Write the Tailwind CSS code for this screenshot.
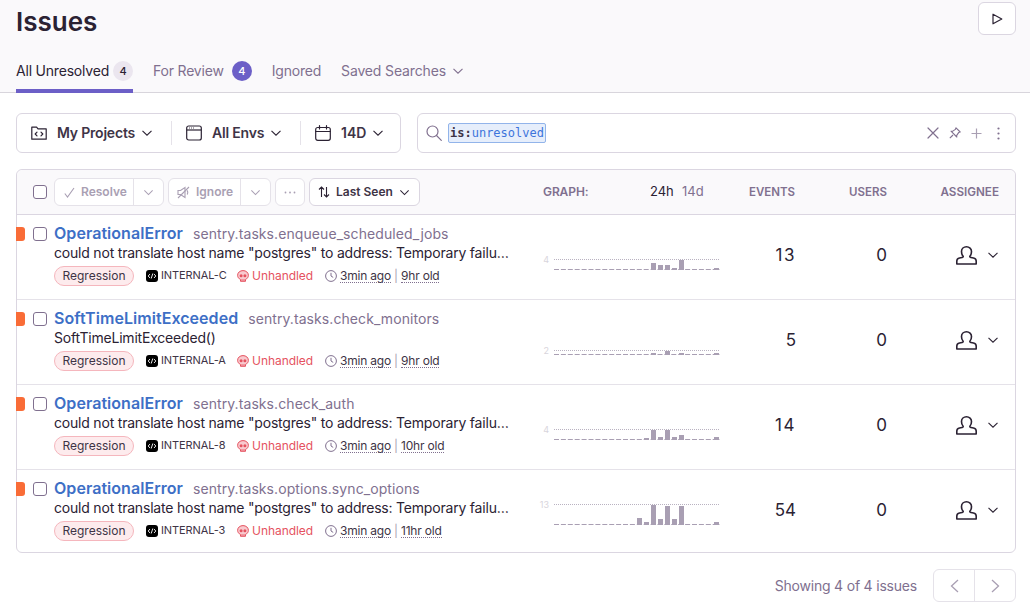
<!DOCTYPE html>
<html>
<head>
<meta charset="utf-8">
<script src="https://cdn.jsdelivr.net/npm/@tailwindcss/browser@4"></script>
</head>
<body class="w-[1030px] h-[612px] overflow-hidden bg-white font-['Inter',sans-serif] text-[#2b2233]">
<header class="h-[93px] bg-[#faf9fb] border-b border-[#d8d5dc] flex flex-col justify-between">
  <div class="flex justify-between items-start pl-4 pr-[14px] pt-[2px]">
    <h1 class="text-[26px] leading-[40px] font-semibold">Issues</h1>
    <button class="w-[38px] h-[33px] bg-white border border-[#dbd6e1] rounded-md flex items-center justify-center">
      <svg width="12" height="12" viewBox="0 0 12 12" fill="none" stroke="#2b2233" stroke-width="1.2" stroke-linejoin="round"><path d="M2 1.200v9.600L10.800 6z"/></svg>
    </button>
  </div>
  <nav class="flex items-stretch px-4 h-[36px] text-sm -mb-px">
    <a class="flex items-start gap-[4px] pt-[4px] border-b-4 border-[#6c5fc7] mr-5 text-[#2b2233] tracking-[-0.2px]">All Unresolved <span class="w-5 h-5 rounded-full bg-[#ebe6ef] text-[11px] leading-5 text-center font-medium">4</span></a>
    <a class="flex items-start gap-2 pt-[4px] mr-5 text-[#80708f] tracking-[-0.2px]">For Review <span class="w-5 h-5 rounded-full bg-[#6c5fc7] text-white text-[11px] leading-5 text-center font-medium">4</span></a>
    <a class="pt-[4px] mr-5 text-[#80708f] tracking-[-0.2px]">Ignored</a>
    <a class="flex items-start gap-[6px] pt-[4px] text-[#80708f] tracking-[-0.15px]">Saved Searches
      <svg class="mt-[4px]" width="12" height="12" viewBox="0 0 12 12" fill="none" stroke="#80708f" stroke-width="1.100"><path d="M1.500 3.800 6 8.200l4.500-4.400"/></svg>
    </a>
  </nav>
</header>

<main class="pl-4 pr-[14px] pt-5">
  <div class="flex gap-4 h-10">
    <div class="w-[385px] border border-[#dbd6e1] rounded-md flex items-center text-sm font-semibold text-[#3e3446]">
      <div class="flex items-center pl-[14px] w-[155px] border-r border-[#e5e2e9] h-[24px]">
        <svg width="16" height="16" viewBox="0 0 16 16" fill="none" stroke="#2b2233" stroke-width="1.200" stroke-linejoin="round" stroke-linecap="round"><path d="M.8 2.200h4.800l1.400 1.600h8.200v10.400H.8z"/><path d="M6 7.200 4.200 9 6 10.800M10 7.200 11.800 9 10 10.800"/></svg>
        <span class="ml-[10px] tracking-[-0.2px]">My Projects</span>
        <svg class="ml-[6px]" width="12" height="12" viewBox="0 0 12 12" fill="none" stroke="#2b2233" stroke-width="1.100"><path d="M1.500 3.800 6 8.200l4.500-4.400"/></svg>
      </div>
      <div class="flex items-center pl-[14px] w-[129px] border-r border-[#e5e2e9] h-[24px]">
        <svg width="16" height="16" viewBox="0 0 16 16" fill="none" stroke="#2b2233" stroke-width="1.200"><rect x=".7" y="1" width="14.600" height="14" rx="2"/><path d="M.7 5h14.600"/><path d="M3 3h.8M5 3h.8M7 3h.8" stroke-width="1"/></svg>
        <span class="ml-[10px] tracking-[-0.2px]">All Envs</span>
        <svg class="ml-[6px]" width="12" height="12" viewBox="0 0 12 12" fill="none" stroke="#2b2233" stroke-width="1.100"><path d="M1.500 3.800 6 8.200l4.500-4.400"/></svg>
      </div>
      <div class="flex items-center pl-[14px]">
        <svg width="16" height="16" viewBox="0 0 16 16" fill="none" stroke="#2b2233" stroke-width="1.200" stroke-linecap="round"><rect x=".7" y="2.500" width="14.600" height="12.800" rx="2"/><path d="M.7 6.500h14.600M4.500.7v3.200M11.500.7v3.200"/></svg>
        <span class="ml-[10px]">14D</span>
        <svg class="ml-[6px]" width="12" height="12" viewBox="0 0 12 12" fill="none" stroke="#2b2233" stroke-width="1.100"><path d="M1.500 3.800 6 8.200l4.500-4.400"/></svg>
      </div>
    </div>
    <div class="flex-1 border border-[#dbd6e1] rounded-md flex items-center pl-[8px] pr-[15px]">
      <svg width="16" height="16" viewBox="0 0 16 16" fill="none" stroke="#80708f" stroke-width="1.200" stroke-linecap="round"><circle cx="6.500" cy="6.500" r="5.500"/><path d="m10.500 10.500 4.800 4.800"/></svg>
      <span class="ml-[6px] h-[20px] px-px bg-[#e6eefb] border border-[#92b4ea] rounded-[2px] font-['DejaVu_Sans_Mono',monospace] text-[12px] leading-[18px]"><span class="text-[#3e3446] font-semibold">is:</span><span class="text-[#3d74db]">unresolved</span></span>
      <div class="ml-auto flex items-center text-[#80708f]">
        <svg width="12" height="12" viewBox="0 0 12 12" fill="none" stroke="#80708f" stroke-width="1.200" stroke-linecap="round"><path d="m1 1 10 10M11 1 1 11"/></svg>
        <svg class="ml-[10px]" width="12" height="12" viewBox="0 0 12 12" fill="none" stroke="#80708f" stroke-width="1.100" stroke-linejoin="round"><path d="M7 .8 11.200 5 9.600 5.600 7.600 8.600 7.800 10 2 4.200 3.400 4.400 6.400 2.400z"/><path d="M4 8 .8 11.200"/></svg>
        <svg class="ml-[10px]" width="11" height="11" viewBox="0 0 11 11" fill="none" stroke="#a99fb3" stroke-width="1.200"><path d="M5.500.5v10M.5 5.500h10"/></svg>
        <svg class="ml-[15px]" width="3" height="13" viewBox="0 0 3 13" fill="#80708f"><circle cx="1.500" cy="1.500" r="1.100"/><circle cx="1.500" cy="6.500" r="1.100"/><circle cx="1.500" cy="11.500" r="1.100"/></svg>
      </div>
    </div>
  </div>

  <section class="mt-4 h-[384px] border border-[#dbd6e1] rounded-md flex flex-col">
    <div class="h-[45px] shrink-0 bg-[#faf9fb] rounded-t-md border-b border-[#dbd6e1] flex items-center pl-4 pr-4 text-xs font-semibold text-[#80708f]">
      <span class="w-[14px] h-[14px] border border-[#80708f] rounded-[3px] bg-white shrink-0"></span>
      <div class="ml-[7px] flex h-[28px] w-[110px] border border-[#e5e2e9] rounded-md text-[#a99fb3] bg-white">
        <span class="w-[79px] border-r border-[#e5e2e9] flex items-center pl-[9px] gap-[6px]">
          <svg width="11" height="11" viewBox="0 0 11 11" fill="none" stroke="#a99fb3" stroke-width="1.100"><path d="M.8 6.500 3.500 10 10 1"/></svg>Resolve</span>
        <span class="flex-1 flex items-center justify-center"><svg width="11" height="11" viewBox="0 0 12 12" fill="none" stroke="#a99fb3" stroke-width="1.100"><path d="M1.500 3.800 6 8.200l4.500-4.400"/></svg></span>
      </div>
      <div class="ml-[4px] flex h-[28px] w-[103px] border border-[#e5e2e9] rounded-md text-[#a99fb3] bg-white">
        <span class="w-[72px] border-r border-[#e5e2e9] flex items-center pl-[8px] gap-[6px]">
          <svg width="13" height="13" viewBox="0 0 13 13" fill="none" stroke="#a99fb3" stroke-width="1.100"><path d="M1 4.500h2.500L8 1.500v10L3.500 8.500H1z"/><path d="M1 12 12 1M10 4.500c1 1 1 3 0 4"/></svg>Ignore</span>
        <span class="flex-1 flex items-center justify-center"><svg width="11" height="11" viewBox="0 0 12 12" fill="none" stroke="#a99fb3" stroke-width="1.100"><path d="M1.500 3.800 6 8.200l4.500-4.400"/></svg></span>
      </div>
      <div class="ml-[4px] h-[28px] w-[30px] border border-[#e5e2e9] rounded-md bg-white flex items-center justify-center">
        <svg width="12" height="3" viewBox="0 0 12 3" fill="#a99fb3"><circle cx="1.500" cy="1.500" r=".9"/><circle cx="6" cy="1.500" r=".9"/><circle cx="10.500" cy="1.500" r=".9"/></svg>
      </div>
      <div class="ml-[4px] h-[28px] w-[111px] border border-[#dbd6e1] rounded-md bg-white flex items-center pl-[8px] gap-[6px] text-[#3e3446]">
        <svg width="12" height="12" viewBox="0 0 12 12" fill="none" stroke="#2b2233" stroke-width="1.100"><path d="M3.500 11V1M1 3.500 3.500 1 6 3.500M8.500 1v10M6 8.500 8.500 11 11 8.500"/></svg>
        <span>Last Seen</span>
        <svg width="11" height="11" viewBox="0 0 12 12" fill="none" stroke="#2b2233" stroke-width="1.100"><path d="M1.500 3.800 6 8.200l4.500-4.400"/></svg>
      </div>
      <span class="ml-[123px] w-[107px] text-[12px] tracking-[-0.1px] -mt-[1px]">GRAPH:</span>
      <span class="text-[#2b2233] font-normal text-[13px] w-[32px] -mt-[1px]">24h</span>
      <span class="font-normal text-[13px] w-[67px] -mt-[1px]">14d</span>
      <span class="w-[46px] mt-[1px] text-right text-[11.500px]">EVENTS</span>
      <span class="w-[92px] mt-[1px] text-right text-[11.500px]">USERS</span>
      <span class="ml-auto mt-[1px] text-right text-[11.700px]">ASSIGNEE</span>
    </div>

    <article class="relative h-[85px] border-b border-[#e5e2e9] flex">
      <span class="absolute -left-px top-[12px] w-[9px] h-[14px] rounded-r-[3px] bg-[#f96c37]"></span>
      <span class="ml-4 mt-[12px] w-[14px] h-[14px] border border-[#80708f] rounded-[3px] shrink-0"></span>
      <div class="ml-[7px] w-[484px] pt-[8px]">
        <div class="flex items-baseline leading-[21px] whitespace-nowrap"><b class="text-[#3d6fc6] text-[16px] font-semibold tracking-[0.05px]">OperationalError</b><span class="ml-[10px] text-[#80708f] text-sm tracking-[0.08px]">sentry.tasks.enqueue_scheduled_jobs</span></div>
        <p class="text-sm leading-[17px] tracking-[-0.2px] whitespace-nowrap overflow-hidden text-ellipsis w-[455px]">could not translate host name "postgres" to address: Temporary failure in name resolution</p>
        <div class="mt-[4px] flex items-center h-[21px] text-xs text-[#80708f] whitespace-nowrap">
          <span class="w-[80px] h-[20px] rounded-full bg-[#fdebed] border border-[#f5b6bd] text-[#3e3446] text-center leading-[18px] text-[12px]">Regression</span>
          <svg class="ml-[12px]" width="12" height="12" viewBox="0 0 12 12"><rect width="12" height="12" rx="3" fill="#000"/><path d="M4 4 2.200 6 4 8M8 4l1.800 2L8 8M6.800 3.500l-1.600 5" fill="none" stroke="#fff" stroke-width=".9"/></svg>
          <span class="ml-[3px] text-[#3e3446] text-[11px] tracking-[-0.1px] w-[76px]">INTERNAL-C</span>
          <svg width="12" height="12" viewBox="0 0 12 12"><path d="M3.500 11.300V9.500C1.800 8.700.6 7.200.6 5.300.6 2.500 3 .6 6 .6s5.400 1.900 5.400 4.700c0 1.900-1.200 3.400-2.900 4.200v1.800z" fill="#f8c9ce" stroke="#e5525f"/><circle cx="4.100" cy="5.700" r="1.500" fill="#e5525f"/><circle cx="7.900" cy="5.700" r="1.500" fill="#e5525f"/><path d="M5 9v2M7 9v2" stroke="#e5525f" stroke-width=".8"/></svg>
          <span class="ml-[3px] text-[#e5525f] w-[73px] tracking-[-0.05px]">Unhandled</span>
          <svg width="12" height="12" viewBox="0 0 12 12" fill="none" stroke="#80708f" stroke-width="1"><circle cx="6" cy="6" r="5.400"/><path d="M6 2.800V6l2.200 1.400"/></svg>
          <span class="ml-[3px] text-[#3e3446] border-b border-dotted border-[#80708f] leading-[13px] tracking-[-0.2px]">3min ago</span><span class="mx-[3px] text-[#a99fb3]">|</span><span class="text-[#3e3446] border-b border-dotted border-[#80708f] leading-[13px] tracking-[-0.2px]">9hr old</span>
        </div>
      </div>
      <div class="relative w-[185px]">
        <span class="absolute left-0 top-[39px] text-[9px] leading-[11px] text-[#d8d5dc] w-[11px] text-right">4</span>
        <svg class="absolute left-[16px] top-[44px]" width="166" height="12" viewBox="0 0 166 12" fill="#a99fb3">
          <path d="M0 .5h166" stroke="#b9b2c1" stroke-dasharray="1 1"/><path d="M0 10.500h166" stroke="#a99fb3" stroke-dasharray="5 1.900"/>
          <rect x="97" y="4" width="5" height="7"/><rect x="104" y="6" width="5" height="5"/><rect x="111" y="6" width="5" height="5"/><rect x="118" y="9" width="5" height="2"/><rect x="125" y="1" width="5" height="10"/><rect x="160" y="9" width="5" height="2"/>
        </svg>
      </div>
      <div class="w-[73px] text-right pt-[29px] text-[17px] leading-[22px] tracking-[1.5px]">13</div>
      <div class="w-[91px] text-right pt-[29px] text-[17px] leading-[22px]">0</div>
      <div class="ml-[69px] mt-[31px] flex items-start gap-[10px]">
        <svg width="21" height="19" viewBox="0 0 21 19" fill="none" stroke="#2b2233" stroke-width="1.600" stroke-linejoin="round"><path d="M5.500 5.500a5 4.700 0 0 1 10 0c0 2-.5 3.500-1.500 4.500-.5.5 0 1.300 1 1.500l2.500.5c1.800.4 2.700 1.300 2.700 3v3H.8v-3c0-1.700.9-2.600 2.700-3l2.500-.5c1-.2 1.500-1 1-1.500-1-1-1.500-2.500-1.500-4.500z"/></svg>
        <svg class="mt-[3px]" width="12" height="12" viewBox="0 0 12 12" fill="none" stroke="#2b2233" stroke-width="1.100"><path d="M1.500 3.800 6 8.200l4.500-4.400"/></svg>
      </div>
    </article>

    <article class="relative h-[85px] border-b border-[#e5e2e9] flex">
      <span class="absolute -left-px top-[12px] w-[9px] h-[14px] rounded-r-[3px] bg-[#f96c37]"></span>
      <span class="ml-4 mt-[12px] w-[14px] h-[14px] border border-[#80708f] rounded-[3px] shrink-0"></span>
      <div class="ml-[7px] w-[484px] pt-[8px]">
        <div class="flex items-baseline leading-[21px] whitespace-nowrap"><b class="text-[#3d6fc6] text-[16px] font-semibold tracking-[0.05px]">SoftTimeLimitExceeded</b><span class="ml-[10px] text-[#80708f] text-sm tracking-[0.08px]">sentry.tasks.check_monitors</span></div>
        <p class="text-sm leading-[17px] tracking-[-0.2px] whitespace-nowrap overflow-hidden text-ellipsis w-[455px]">SoftTimeLimitExceeded()</p>
        <div class="mt-[4px] flex items-center h-[21px] text-xs text-[#80708f] whitespace-nowrap">
          <span class="w-[80px] h-[20px] rounded-full bg-[#fdebed] border border-[#f5b6bd] text-[#3e3446] text-center leading-[18px] text-[12px]">Regression</span>
          <svg class="ml-[12px]" width="12" height="12" viewBox="0 0 12 12"><rect width="12" height="12" rx="3" fill="#000"/><path d="M4 4 2.200 6 4 8M8 4l1.800 2L8 8M6.800 3.500l-1.600 5" fill="none" stroke="#fff" stroke-width=".9"/></svg>
          <span class="ml-[3px] text-[#3e3446] text-[11px] tracking-[-0.1px] w-[76px]">INTERNAL-A</span>
          <svg width="12" height="12" viewBox="0 0 12 12"><path d="M3.500 11.300V9.500C1.800 8.700.6 7.200.6 5.300.6 2.500 3 .6 6 .6s5.400 1.900 5.400 4.700c0 1.900-1.200 3.400-2.900 4.200v1.800z" fill="#f8c9ce" stroke="#e5525f"/><circle cx="4.100" cy="5.700" r="1.500" fill="#e5525f"/><circle cx="7.900" cy="5.700" r="1.500" fill="#e5525f"/><path d="M5 9v2M7 9v2" stroke="#e5525f" stroke-width=".8"/></svg>
          <span class="ml-[3px] text-[#e5525f] w-[73px] tracking-[-0.05px]">Unhandled</span>
          <svg width="12" height="12" viewBox="0 0 12 12" fill="none" stroke="#80708f" stroke-width="1"><circle cx="6" cy="6" r="5.400"/><path d="M6 2.800V6l2.200 1.400"/></svg>
          <span class="ml-[3px] text-[#3e3446] border-b border-dotted border-[#80708f] leading-[13px] tracking-[-0.2px]">3min ago</span><span class="mx-[3px] text-[#a99fb3]">|</span><span class="text-[#3e3446] border-b border-dotted border-[#80708f] leading-[13px] tracking-[-0.2px]">9hr old</span>
        </div>
      </div>
      <div class="relative w-[185px]">
        <span class="absolute left-0 top-[45px] text-[9px] leading-[11px] text-[#d8d5dc] w-[11px] text-right">2</span>
        <svg class="absolute left-[16px] top-[50px]" width="166" height="6" viewBox="0 0 166 6" fill="#a99fb3">
          <path d="M0 .5h166" stroke="#b9b2c1" stroke-dasharray="1 1"/><path d="M0 4.500h166" stroke="#a99fb3" stroke-dasharray="5 1.900"/>
          <rect x="97" y="3" width="5" height="2"/><rect x="111" y="1" width="5" height="4"/><rect x="125" y="3" width="5" height="2"/><rect x="160" y="3" width="5" height="2"/>
        </svg>
      </div>
      <div class="w-[73px] text-right pt-[29px] text-[17px] leading-[22px]">5</div>
      <div class="w-[91px] text-right pt-[29px] text-[17px] leading-[22px]">0</div>
      <div class="ml-[69px] mt-[31px] flex items-start gap-[10px]">
        <svg width="21" height="19" viewBox="0 0 21 19" fill="none" stroke="#2b2233" stroke-width="1.600" stroke-linejoin="round"><path d="M5.500 5.500a5 4.700 0 0 1 10 0c0 2-.5 3.500-1.500 4.500-.5.5 0 1.300 1 1.500l2.500.5c1.800.4 2.700 1.300 2.700 3v3H.8v-3c0-1.700.9-2.600 2.700-3l2.500-.5c1-.2 1.500-1 1-1.500-1-1-1.500-2.500-1.500-4.500z"/></svg>
        <svg class="mt-[3px]" width="12" height="12" viewBox="0 0 12 12" fill="none" stroke="#2b2233" stroke-width="1.100"><path d="M1.500 3.800 6 8.200l4.500-4.400"/></svg>
      </div>
    </article>

    <article class="relative h-[85px] border-b border-[#e5e2e9] flex">
      <span class="absolute -left-px top-[12px] w-[9px] h-[14px] rounded-r-[3px] bg-[#f96c37]"></span>
      <span class="ml-4 mt-[12px] w-[14px] h-[14px] border border-[#80708f] rounded-[3px] shrink-0"></span>
      <div class="ml-[7px] w-[484px] pt-[8px]">
        <div class="flex items-baseline leading-[21px] whitespace-nowrap"><b class="text-[#3d6fc6] text-[16px] font-semibold tracking-[0.05px]">OperationalError</b><span class="ml-[10px] text-[#80708f] text-sm tracking-[0.08px]">sentry.tasks.check_auth</span></div>
        <p class="text-sm leading-[17px] tracking-[-0.2px] whitespace-nowrap overflow-hidden text-ellipsis w-[455px]">could not translate host name "postgres" to address: Temporary failure in name resolution</p>
        <div class="mt-[4px] flex items-center h-[21px] text-xs text-[#80708f] whitespace-nowrap">
          <span class="w-[80px] h-[20px] rounded-full bg-[#fdebed] border border-[#f5b6bd] text-[#3e3446] text-center leading-[18px] text-[12px]">Regression</span>
          <svg class="ml-[12px]" width="12" height="12" viewBox="0 0 12 12"><rect width="12" height="12" rx="3" fill="#000"/><path d="M4 4 2.200 6 4 8M8 4l1.800 2L8 8M6.800 3.500l-1.600 5" fill="none" stroke="#fff" stroke-width=".9"/></svg>
          <span class="ml-[3px] text-[#3e3446] text-[11px] tracking-[-0.1px] w-[76px]">INTERNAL-8</span>
          <svg width="12" height="12" viewBox="0 0 12 12"><path d="M3.500 11.300V9.500C1.800 8.700.6 7.200.6 5.300.6 2.500 3 .6 6 .6s5.400 1.900 5.400 4.700c0 1.900-1.200 3.400-2.900 4.200v1.800z" fill="#f8c9ce" stroke="#e5525f"/><circle cx="4.100" cy="5.700" r="1.500" fill="#e5525f"/><circle cx="7.900" cy="5.700" r="1.500" fill="#e5525f"/><path d="M5 9v2M7 9v2" stroke="#e5525f" stroke-width=".8"/></svg>
          <span class="ml-[3px] text-[#e5525f] w-[73px] tracking-[-0.05px]">Unhandled</span>
          <svg width="12" height="12" viewBox="0 0 12 12" fill="none" stroke="#80708f" stroke-width="1"><circle cx="6" cy="6" r="5.400"/><path d="M6 2.800V6l2.200 1.400"/></svg>
          <span class="ml-[3px] text-[#3e3446] border-b border-dotted border-[#80708f] leading-[13px] tracking-[-0.2px]">3min ago</span><span class="mx-[3px] text-[#a99fb3]">|</span><span class="text-[#3e3446] border-b border-dotted border-[#80708f] leading-[13px] tracking-[-0.2px]">10hr old</span>
        </div>
      </div>
      <div class="relative w-[185px]">
        <span class="absolute left-0 top-[39px] text-[9px] leading-[11px] text-[#d8d5dc] w-[11px] text-right">4</span>
        <svg class="absolute left-[16px] top-[44px]" width="166" height="12" viewBox="0 0 166 12" fill="#a99fb3">
          <path d="M0 .5h166" stroke="#b9b2c1" stroke-dasharray="1 1"/><path d="M0 10.500h166" stroke="#a99fb3" stroke-dasharray="5 1.900"/>
          <rect x="90" y="9" width="5" height="2"/><rect x="97" y="1" width="5" height="10"/><rect x="104" y="8" width="5" height="3"/><rect x="111" y="1" width="5" height="10"/><rect x="118" y="8" width="5" height="3"/><rect x="125" y="6" width="5" height="5"/><rect x="160" y="8" width="5" height="3"/>
        </svg>
      </div>
      <div class="w-[73px] text-right pt-[29px] text-[17px] leading-[22px] tracking-[1.5px]">14</div>
      <div class="w-[91px] text-right pt-[29px] text-[17px] leading-[22px]">0</div>
      <div class="ml-[69px] mt-[31px] flex items-start gap-[10px]">
        <svg width="21" height="19" viewBox="0 0 21 19" fill="none" stroke="#2b2233" stroke-width="1.600" stroke-linejoin="round"><path d="M5.500 5.500a5 4.700 0 0 1 10 0c0 2-.5 3.500-1.500 4.500-.5.5 0 1.300 1 1.500l2.500.5c1.800.4 2.700 1.300 2.700 3v3H.8v-3c0-1.700.9-2.600 2.700-3l2.500-.5c1-.2 1.500-1 1-1.500-1-1-1.500-2.500-1.500-4.500z"/></svg>
        <svg class="mt-[3px]" width="12" height="12" viewBox="0 0 12 12" fill="none" stroke="#2b2233" stroke-width="1.100"><path d="M1.500 3.800 6 8.200l4.500-4.400"/></svg>
      </div>
    </article>

    <article class="relative flex-1 flex">
      <span class="absolute -left-px top-[12px] w-[9px] h-[14px] rounded-r-[3px] bg-[#f96c37]"></span>
      <span class="ml-4 mt-[12px] w-[14px] h-[14px] border border-[#80708f] rounded-[3px] shrink-0"></span>
      <div class="ml-[7px] w-[484px] pt-[8px]">
        <div class="flex items-baseline leading-[21px] whitespace-nowrap"><b class="text-[#3d6fc6] text-[16px] font-semibold tracking-[0.05px]">OperationalError</b><span class="ml-[10px] text-[#80708f] text-sm tracking-[0.08px]">sentry.tasks.options.sync_options</span></div>
        <p class="text-sm leading-[17px] tracking-[-0.2px] whitespace-nowrap overflow-hidden text-ellipsis w-[455px]">could not translate host name "postgres" to address: Temporary failure in name resolution</p>
        <div class="mt-[4px] flex items-center h-[21px] text-xs text-[#80708f] whitespace-nowrap">
          <span class="w-[80px] h-[20px] rounded-full bg-[#fdebed] border border-[#f5b6bd] text-[#3e3446] text-center leading-[18px] text-[12px]">Regression</span>
          <svg class="ml-[12px]" width="12" height="12" viewBox="0 0 12 12"><rect width="12" height="12" rx="3" fill="#000"/><path d="M4 4 2.200 6 4 8M8 4l1.800 2L8 8M6.800 3.500l-1.600 5" fill="none" stroke="#fff" stroke-width=".9"/></svg>
          <span class="ml-[3px] text-[#3e3446] text-[11px] tracking-[-0.1px] w-[76px]">INTERNAL-3</span>
          <svg width="12" height="12" viewBox="0 0 12 12"><path d="M3.500 11.300V9.500C1.800 8.700.6 7.200.6 5.300.6 2.500 3 .6 6 .6s5.400 1.900 5.400 4.700c0 1.900-1.200 3.400-2.900 4.200v1.800z" fill="#f8c9ce" stroke="#e5525f"/><circle cx="4.100" cy="5.700" r="1.500" fill="#e5525f"/><circle cx="7.900" cy="5.700" r="1.500" fill="#e5525f"/><path d="M5 9v2M7 9v2" stroke="#e5525f" stroke-width=".8"/></svg>
          <span class="ml-[3px] text-[#e5525f] w-[73px] tracking-[-0.05px]">Unhandled</span>
          <svg width="12" height="12" viewBox="0 0 12 12" fill="none" stroke="#80708f" stroke-width="1"><circle cx="6" cy="6" r="5.400"/><path d="M6 2.800V6l2.200 1.400"/></svg>
          <span class="ml-[3px] text-[#3e3446] border-b border-dotted border-[#80708f] leading-[13px] tracking-[-0.2px]">3min ago</span><span class="mx-[3px] text-[#a99fb3]">|</span><span class="text-[#3e3446] border-b border-dotted border-[#80708f] leading-[13px] tracking-[-0.2px]">11hr old</span>
        </div>
      </div>
      <div class="relative w-[185px]">
        <span class="absolute left-[-6px] top-[29px] text-[9px] leading-[11px] text-[#d8d5dc] w-[17px] text-right">13</span>
        <svg class="absolute left-[16px] top-[34px]" width="166" height="22" viewBox="0 0 166 22" fill="#a99fb3">
          <path d="M0 .5h166" stroke="#b9b2c1" stroke-dasharray="1 1"/><path d="M0 20.500h166" stroke="#a99fb3" stroke-dasharray="5 1.900"/>
          <rect x="83" y="14" width="5" height="7"/><rect x="90" y="18" width="5" height="3"/><rect x="97" y="1" width="5" height="20"/><rect x="104" y="15" width="5" height="6"/><rect x="111" y="2" width="5" height="19"/><rect x="118" y="15" width="5" height="6"/><rect x="125" y="2" width="5" height="19"/><rect x="160" y="18" width="5" height="3"/>
        </svg>
      </div>
      <div class="w-[73px] text-right pt-[29px] text-[17px] leading-[22px]">54</div>
      <div class="w-[91px] text-right pt-[29px] text-[17px] leading-[22px]">0</div>
      <div class="ml-[69px] mt-[31px] flex items-start gap-[10px]">
        <svg width="21" height="19" viewBox="0 0 21 19" fill="none" stroke="#2b2233" stroke-width="1.600" stroke-linejoin="round"><path d="M5.500 5.500a5 4.700 0 0 1 10 0c0 2-.5 3.500-1.500 4.500-.5.5 0 1.300 1 1.500l2.500.5c1.800.4 2.700 1.300 2.700 3v3H.8v-3c0-1.700.9-2.600 2.700-3l2.500-.5c1-.2 1.500-1 1-1.500-1-1-1.500-2.500-1.500-4.500z"/></svg>
        <svg class="mt-[3px]" width="12" height="12" viewBox="0 0 12 12" fill="none" stroke="#2b2233" stroke-width="1.100"><path d="M1.500 3.800 6 8.200l4.500-4.400"/></svg>
      </div>
    </article>
  </section>

  <div class="mt-4 flex justify-end items-center">
    <span class="text-sm text-[#80708f] tracking-[-0.2px] mr-4 mt-[1px]">Showing 4 of 4 issues</span>
    <div class="w-[83px] h-[33px] border border-[#e5e2e9] rounded-md flex">
      <span class="w-[41px] border-r border-[#e5e2e9] flex items-center justify-center"><svg width="9" height="14" viewBox="0 0 9 14" fill="none" stroke="#a99fb3" stroke-width="1.300"><path d="M8 1 1.500 7 8 13"/></svg></span>
      <span class="flex-1 flex items-center justify-center"><svg width="9" height="14" viewBox="0 0 9 14" fill="none" stroke="#a99fb3" stroke-width="1.300"><path d="M1 1l6.500 6L1 13"/></svg></span>
    </div>
  </div>
</main>
</body>
</html>
